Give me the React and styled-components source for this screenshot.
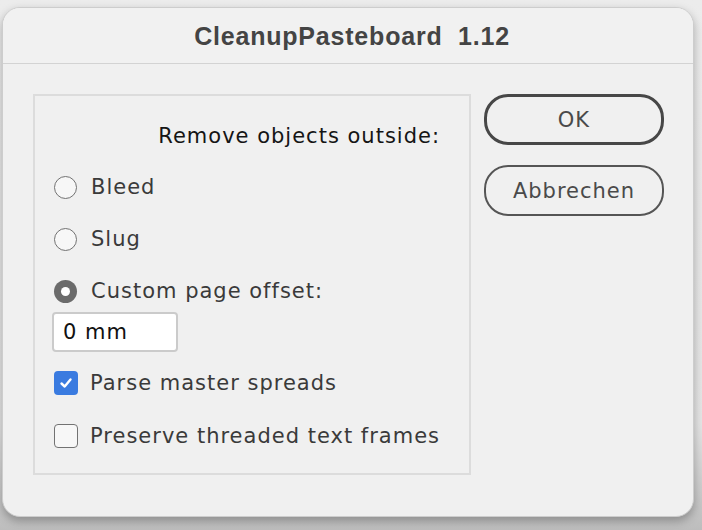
import React from "react";
import styled, { createGlobalStyle } from "styled-components";

const GlobalStyle = createGlobalStyle`
  html, body {
    margin: 0;
    padding: 0;
    background: #e9e9e9;
  }
  body {
    width: 702px;
    height: 530px;
    overflow: hidden;
    font-family: "DejaVu Sans", "Noto Sans", sans-serif;
  }
`;

const Desk = styled.div`
  width: 702px;
  height: 530px;
  box-sizing: border-box;
  padding: 7px 8px 0 2px;
  background: linear-gradient(to bottom, #ececec 0%, #e4e4e4 80%, #bdbdbd 100%);
`;

const Dialog = styled.div`
  width: 692px;
  height: 510px;
  box-sizing: border-box;
  background: #f0f0f0;
  border: 1px solid #cdcdcd;
  border-radius: 18px;
  box-shadow: 0 4px 10px rgba(0, 0, 0, 0.28);
  overflow: hidden;
  display: flex;
  flex-direction: column;
`;

const TitleBar = styled.div`
  height: 56px;
  flex: none;
  display: flex;
  align-items: center;
  justify-content: center;
  border-bottom: 1px solid #d3d3d3;
  background: #f1f1f1;
  font-family: "Liberation Sans", Arial, sans-serif;
  font-weight: 700;
  font-size: 25px;
  letter-spacing: 0.8px;
  color: #444;
  padding-left: 8px;
  padding-top: 1px;
  box-sizing: border-box;
`;

const Body = styled.div`
  display: flex;
  align-items: flex-start;
  gap: 13px;
  padding: 30px 0 0 30px;
`;

const Panel = styled.div`
  width: 438px;
  height: 381px;
  box-sizing: border-box;
  border: 2px solid #dcdcdc;
  display: flex;
  flex-direction: column;
  padding: 0 0 0 19px;
`;

const Heading = styled.div`
  height: 65px;
  display: flex;
  align-items: center;
  justify-content: flex-end;
  padding: 15px 29px 0 0;
  box-sizing: border-box;
  font-size: 21px;
  letter-spacing: 1px;
  color: #151515;
`;

const Row = styled.label`
  height: ${p => p.$h || 52}px;
  flex: none;
  display: flex;
  align-items: center;
  gap: ${p => p.$gap || 14}px;
  font-size: 21px;
  letter-spacing: 1px;
  color: #3a3a3a;
`;

const Radio = styled.span`
  width: 23px;
  height: 23px;
  box-sizing: border-box;
  border-radius: 50%;
  flex: none;
  border: ${p => (p.$on ? "none" : "1.5px solid #727272")};
  background: ${p => (p.$on ? "#6b6b6b" : "#f7f7f7")};
  display: flex;
  align-items: center;
  justify-content: center;
  &::after {
    content: "";
    display: ${p => (p.$on ? "block" : "none")};
    width: 9px;
    height: 9px;
    border-radius: 50%;
    background: #ffffff;
  }
`;

const Box = styled.span`
  width: 24px;
  height: 24px;
  box-sizing: border-box;
  border-radius: 4px;
  flex: none;
  border: ${p => (p.$on ? "none" : "1.5px solid #727272")};
  background: ${p => (p.$on ? "#3a7be0" : "#f7f7f7")};
  display: flex;
  align-items: center;
  justify-content: center;
`;

const Field = styled.div`
  margin: -5px 0 0 -2px;
  width: 126px;
  height: 40px;
  flex: none;
  box-sizing: border-box;
  background: #ffffff;
  border: 2px solid #cbcbcb;
  border-radius: 4px;
  display: flex;
  align-items: center;
  padding-left: 9px;
  font-size: 21px;
  letter-spacing: 1px;
  color: #111;
`;

const Buttons = styled.div`
  display: flex;
  flex-direction: column;
  gap: 20px;
`;

const Button = styled.div`
  width: 180px;
  height: 51px;
  box-sizing: border-box;
  border: ${p => (p.$primary ? "3px solid #474747" : "2px solid #555")};
  border-radius: 24px;
  display: flex;
  align-items: center;
  justify-content: center;
  font-size: 21px;
  letter-spacing: 1px;
  color: #4a4a4a;
  background: #f0f0f0;
`;

const Check = () => (
  <svg width="16" height="16" viewBox="0 0 16 16">
    <path d="M3.5 8.5 L6.7 11.5 L12.5 4.5" fill="none" stroke="#fff" strokeWidth="2.4" strokeLinecap="round" strokeLinejoin="round" />
  </svg>
);

export default function App() {
  return (
    <>
      <GlobalStyle />
      <Desk>
        <Dialog>
          <TitleBar>CleanupPasteboard&nbsp;&nbsp;1.12</TitleBar>
          <Body>
            <Panel>
              <Heading>Remove objects outside:</Heading>
              <Row>
                <Radio />
                Bleed
              </Row>
              <Row>
                <Radio />
                Slug
              </Row>
              <Row>
                <Radio $on />
                Custom page offset:
              </Row>
              <Field>0 mm</Field>
              <Row $h={62} $gap={12}>
                <Box $on>
                  <Check />
                </Box>
                Parse master spreads
              </Row>
              <Row $h={44} $gap={12}>
                <Box />
                Preserve threaded text frames
              </Row>
            </Panel>
            <Buttons>
              <Button $primary>OK</Button>
              <Button>Abbrechen</Button>
            </Buttons>
          </Body>
        </Dialog>
      </Desk>
    </>
  );
}
